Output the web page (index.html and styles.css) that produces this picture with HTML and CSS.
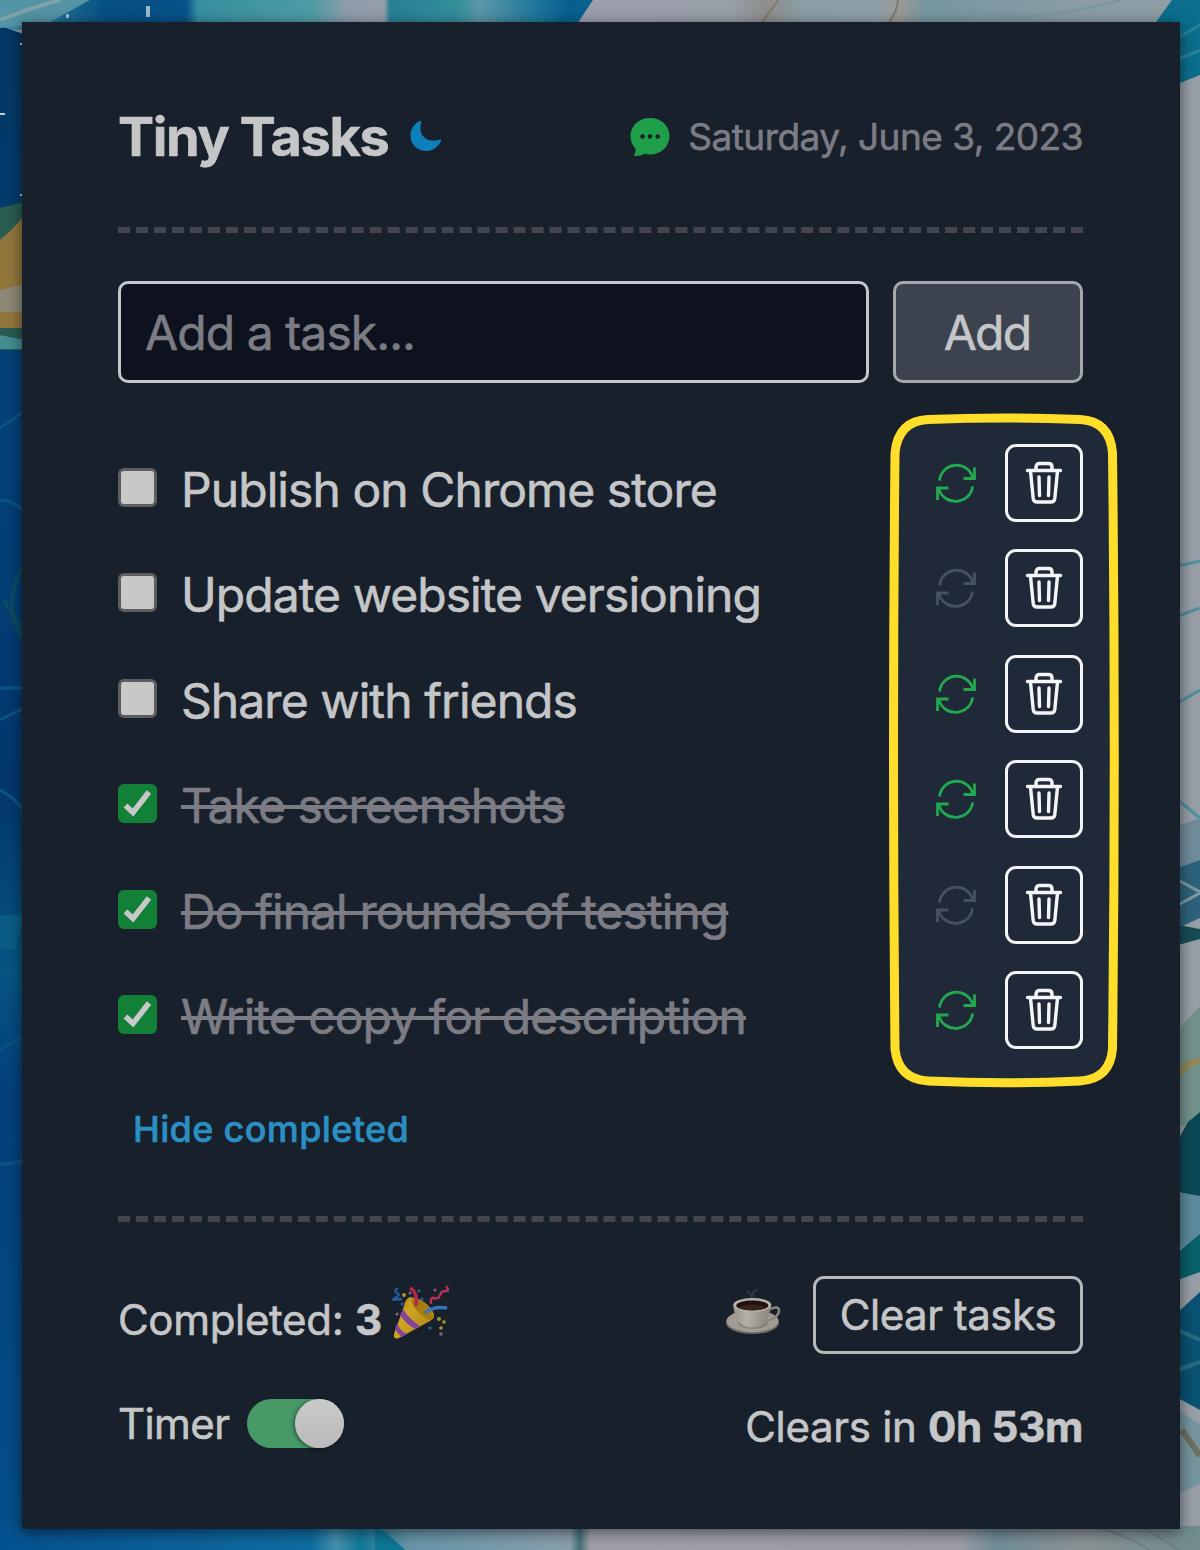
FILE: index.html
```html
<!DOCTYPE html>
<html lang="en">

<head>
    <meta charset="UTF-8">
    <meta name="viewport" content="width=device-width, initial-scale=1.0">
    <title>Tiny Tasks</title>
    <link rel="stylesheet" href="styles.css">
</head>

<body>
    <!-- Painted wallpaper behind the card -->
    <svg class="wallpaper" viewBox="0 0 1200 1550" preserveAspectRatio="none" aria-hidden="true">
        <defs>
            <linearGradient id="topPaint">
                <stop offset="0" stop-color="#4b8fa6" />
                <stop offset=".05" stop-color="#1c6f95" />
                <stop offset=".09" stop-color="#064f82" />
                <stop offset=".155" stop-color="#07538a" />
                <stop offset=".165" stop-color="#368fa0" />
                <stop offset=".26" stop-color="#4f9ca6" />
                <stop offset=".29" stop-color="#919dab" />
                <stop offset=".32" stop-color="#969dab" />
                <stop offset=".325" stop-color="#287f95" />
                <stop offset=".38" stop-color="#338e9b" />
                <stop offset=".4" stop-color="#5c97aa" />
                <stop offset=".45" stop-color="#1a759a" />
                <stop offset=".478" stop-color="#075b8d" />
                <stop offset=".484" stop-color="#9a9fac" />
                <stop offset=".61" stop-color="#989fa8" />
                <stop offset=".64" stop-color="#8e8e8c" />
                <stop offset=".67" stop-color="#8a9fa8" />
                <stop offset=".73" stop-color="#8fa0a8" />
                <stop offset=".75" stop-color="#9c9a95" />
                <stop offset=".77" stop-color="#76979f" />
                <stop offset=".9" stop-color="#8a9da6" />
                <stop offset="1" stop-color="#929fa6" />
            </linearGradient>
            <linearGradient id="leftPaint" x2="0" y2="1">
                <stop offset="0" stop-color="#043763" />
                <stop offset=".25" stop-color="#05427a" />
                <stop offset=".5" stop-color="#03376e" />
                <stop offset=".62" stop-color="#075583" />
                <stop offset=".7" stop-color="#04407c" />
                <stop offset="1" stop-color="#05508a" />
            </linearGradient>
            <linearGradient id="bottomPaint">
                <stop offset="0" stop-color="#055190" />
                <stop offset=".26" stop-color="#0f6da1" />
                <stop offset=".28" stop-color="#4690ae" />
                <stop offset=".3" stop-color="#12799a" />
                <stop offset=".34" stop-color="#6695a8" />
                <stop offset=".475" stop-color="#8aa0ad" />
                <stop offset=".483" stop-color="#486f78" />
                <stop offset=".492" stop-color="#a0a0aa" />
                <stop offset=".8" stop-color="#9c9da6" />
                <stop offset=".83" stop-color="#708e96" />
                <stop offset=".9" stop-color="#8b9397" />
                <stop offset="1" stop-color="#6f8c8e" />
            </linearGradient>
        </defs>
        <rect width="1200" height="1550" fill="#989fa8" />
        <rect width="1200" height="30" fill="url(#topPaint)" />
        <path d="M1172 0h28v75l-30 12-14-65z" fill="#0b6f8d" />
        <path d="M1165 45l35-20M1165 65l35-15" stroke="#2b8299" stroke-width="3" />
        <path d="M575 0h18l-16 24h-22z" fill="#08618f" />
        <path d="M760 24q12-14 18-24M888 24q10-14 10-24" stroke="#81796e" stroke-width="2" fill="none" />
        <path d="M960 8q60 20 160-8" stroke="#7c989f" stroke-width="3" fill="none" />
        <path d="M146 6h4v11h-4zM66 14h3v4h-3z" fill="#9dbccb" />

        <!-- left edge -->
        <path d="M0 26l24 8v1516H0z" fill="url(#leftPaint)" />
        <path d="M0 0h90L50 22 0 28z" fill="#5394a5" />
        <path d="M0 20Q30 8 60 0" stroke="#7fa2ab" stroke-width="4" fill="none" />
        <path d="M0 208l24-6v148H0z" fill="#285d51" />
        <path d="M0 240q14-12 24-24v112H0z" fill="#91763c" />
        <path d="M0 290l24-6v28H0z" fill="#8d8876" />
        <path d="M0 335l24 5v9H0z" fill="#448d91" />
        <path d="M0 428l24-17M0 500q14 0 24 12M0 688h24M0 720l24-12M0 790q16 8 24 22M0 1050l24-14M0 1165l24-4" stroke="#0a5581" stroke-width="3" fill="none" />
        <path d="M24 565q-24 40 0 75M4 600l20 34" stroke="#0c4a66" stroke-width="5" fill="none" />
        <path d="M0 915h24l-8 34H0z" fill="#0b5d86" />
        <path d="M0 114h5M20 44h4M20 195h4" stroke="#c4ccd0" stroke-width="2" />

        <!-- right edge -->
        <path d="M1178 566l22-5M1178 616l22-8M1178 703l22-13M1178 800l22 18" stroke="#4f919f" stroke-width="3" />
        <path d="M1178 826l22-8v50l-22 4z" fill="#708d9b" />
        <path d="M1178 868l22-8v58l-22 10z" fill="#2e637c" />
        <path d="M1178 880l22 12M1178 905l22-12" stroke="#8199a3" stroke-width="3" />
        <path d="M1178 925l22 4v10l-22 6z" fill="#174d56" />
        <path d="M1178 1030l22-24v120h-22z" fill="#74928c" />
        <path d="M1178 1075q10-14 22-14" stroke="#91875b" stroke-width="7" fill="none" />
        <path d="M1178 1140l10-18 12-10v85l-22-5z" fill="#0b4a55" />
        <path d="M1178 1192l22 4v46l-22 6z" fill="#5e8c9d" />
        <path d="M1178 1252l22-18v38l-22 8z" fill="#09606b" />
        <path d="M1178 1312l22-20v118l-22-12z" fill="#0a5272" />
        <path d="M1178 1330l22 10M1178 1370l22-8" stroke="#256f86" stroke-width="4" />
        <path d="M1178 1410l22 14v60l-22 10z" fill="#76959f" />
        <path d="M1182 1430l18 26" stroke="#6c7061" stroke-width="6" />

        <!-- bottom edge -->
        <rect y="1526" width="1200" height="24" fill="url(#bottomPaint)" />
        <path d="M375 1526q14 8 30 24h-30z" fill="#0e7796" />
        <path d="M1090 1526q30 6 60 24M1140 1526l40 24" stroke="#737f82" stroke-width="2" fill="none" />
    </svg>

    <!-- Reusable icons -->
    <svg class="sprite" aria-hidden="true">
        <symbol id="repeat" viewBox="0 0 42 40">
            <path d="M4.500 17.500A17 17 0 0 1 38 15.500M39.500 4.500V15.500H28.500M37.500 23.500A17 16 0 0 1 4 26M2.500 37V25H13.500" />
        </symbol>
        <symbol id="trash" viewBox="0 0 38 44">
            <path d="M2.500 10.500H35.500M11 10V7Q11 3.500 14.500 3.500H23.500Q27 3.500 27 7V10M5.500 11L8.200 38.500Q8.700 42 12 42H26Q29.300 42 29.800 38.500L32.500 11M14 17L14.500 35.500M24 17L23.500 35.500" />
        </symbol>
    </svg>

    <div class="card">
        <header class="header">
            <h1>Tiny Tasks</h1>
            <svg class="moon" viewBox="0 0 32 32">
                <path d="M11.500 1C7 17 18 23.500 30.500 19.500Q32 19 31 21C28 27 23 31 16.500 31C7 31 .5 24.500 .5 15.500C.5 9 4 3.500 10 1Q11.700 .3 11.500 1Z" />
            </svg>
            <svg class="chat" viewBox="0 0 40 40">
                <path d="M20 1C31 1 39.500 8.500 39.500 19S31 37.500 20 37.500Q17 37.500 14.500 36.800Q10 39.500 5 39Q3 38.500 4.500 37Q6 35 5.500 31.500Q.5 26.500 .5 19C.5 8.500 9 1 20 1Z" />
                <g fill="#18202b">
                    <circle cx="12.500" cy="19.500" r="2.300" />
                    <circle cx="20" cy="19.500" r="2.300" />
                    <circle cx="27.700" cy="19.500" r="2.300" />
                </g>
            </svg>
            <span class="date">Saturday, June 3, 2023</span>
        </header>

        <form class="add-form">
            <input class="task-input" type="text" placeholder="Add a task...">
            <button class="add-btn" type="button">Add</button>
        </form>

        <div class="tasks">
            <!-- Highlight around the task actions -->
            <svg class="highlight" viewBox="0 0 232 678">
                <path d="M40 8.500Q116 5.500 192 8.500Q222 10 224.500 42Q228 339 224.500 638Q222 668 192 670Q116 673.500 40 670Q10 668 7 638Q4 339 7 42Q10 10 40 8.500Z" />
            </svg>
            <ul class="task-list">
                <li class="task">
                    <span class="checkbox"></span>
                    <span class="task-name">Publish on Chrome store</span>
                    <svg class="repeat on"><use href="#repeat" /></svg>
                    <button class="delete-btn"><svg class="trash"><use href="#trash" /></svg></button>
                </li>
                <li class="task">
                    <span class="checkbox"></span>
                    <span class="task-name">Update website versioning</span>
                    <svg class="repeat"><use href="#repeat" /></svg>
                    <button class="delete-btn"><svg class="trash"><use href="#trash" /></svg></button>
                </li>
                <li class="task">
                    <span class="checkbox"></span>
                    <span class="task-name">Share with friends</span>
                    <svg class="repeat on"><use href="#repeat" /></svg>
                    <button class="delete-btn"><svg class="trash"><use href="#trash" /></svg></button>
                </li>
                <li class="task done">
                    <span class="checkbox"><svg viewBox="0 0 39 39"><path d="M7.500 21.500L15 28.500L31 8" /></svg></span>
                    <span class="task-name">Take screenshots</span>
                    <svg class="repeat on"><use href="#repeat" /></svg>
                    <button class="delete-btn"><svg class="trash"><use href="#trash" /></svg></button>
                </li>
                <li class="task done">
                    <span class="checkbox"><svg viewBox="0 0 39 39"><path d="M7.500 21.500L15 28.500L31 8" /></svg></span>
                    <span class="task-name">Do final rounds of testing</span>
                    <svg class="repeat"><use href="#repeat" /></svg>
                    <button class="delete-btn"><svg class="trash"><use href="#trash" /></svg></button>
                </li>
                <li class="task done">
                    <span class="checkbox"><svg viewBox="0 0 39 39"><path d="M7.500 21.500L15 28.500L31 8" /></svg></span>
                    <span class="task-name">Write copy for description</span>
                    <svg class="repeat on"><use href="#repeat" /></svg>
                    <button class="delete-btn"><svg class="trash"><use href="#trash" /></svg></button>
                </li>
            </ul>
        </div>

        <a class="hide-link">Hide completed</a>

        <footer class="footer">
            <div class="footer-row">
                <p class="completed">Completed: <b>3</b></p>
                <svg class="party" viewBox="0 0 60 60">
                    <defs>
                        <linearGradient id="cone" x1="0" y1="0" x2="1" y2=".6">
                            <stop offset="0" stop-color="#8d6a16" />
                            <stop offset=".4" stop-color="#d1a622" />
                            <stop offset="1" stop-color="#b48818" />
                        </linearGradient>
                    </defs>
                    <path d="M20 13Q15 15 14 22L4 50Q3 56 9 54L40 37Q47 34 42 26Q33 14 20 13Z" fill="url(#cone)" />
                    <path d="M13 25Q18 34 30 42L25 45Q15 39 10 31ZM7 39Q10 47 17 50L12 53Q7 49 5 45Z" fill="#83439c" />
                    <path d="M22 14Q32 14 40 25Q45 33 41 36Q34 34 27 27Q20 19 22 14Z" fill="#a67c13" />
                    <path d="M20 4Q28 8 26 22" fill="none" stroke="#b3284b" stroke-width="3.500" />
                    <path d="M35 29Q43 22 57 24" fill="none" stroke="#3476b8" stroke-width="3.500" />
                    <path d="M41 20Q40 13 44 14T49 13T51 9T56 7T56 2" fill="none" stroke="#b83053" stroke-width="2.500" />
                    <path d="M8 4Q3 7 7 9T5 14T12 15" fill="none" stroke="#24599e" stroke-width="2.500" />
                    <g fill="#a9962b">
                        <circle cx="14" cy="11" r="2" />
                        <circle cx="49" cy="35" r="2" />
                        <circle cx="54" cy="38" r="1.800" />
                        <circle cx="51" cy="44" r="1.800" />
                    </g>
                    <g fill="#9b547d">
                        <circle cx="20" cy="9" r="1.500" />
                        <circle cx="7" cy="30" r="1.500" />
                        <circle cx="51" cy="50" r="1.800" />
                        <circle cx="45" cy="6" r="1.500" />
                    </g>
                    <g fill="#2a6699">
                        <circle cx="29" cy="7" r="1.600" />
                        <circle cx="32" cy="15" r="1.600" />
                        <circle cx="40" cy="44" r="1.600" />
                        <circle cx="12" cy="20" r="1.500" />
                    </g>
                </svg>
                <svg class="coffee" viewBox="0 0 56 50">
                    <defs>
                        <linearGradient id="cup">
                            <stop offset="0" stop-color="#9a958c" />
                            <stop offset=".35" stop-color="#b5b0a6" />
                            <stop offset="1" stop-color="#87817a" />
                        </linearGradient>
                    </defs>
                    <path d="M21 3Q26 6 25 11M31 2Q24 5 28 9" fill="none" stroke="#343a43" stroke-width="2" />
                    <ellipse cx="26.500" cy="34.500" rx="26.500" ry="11.500" fill="#6f6c66" />
                    <ellipse cx="26.500" cy="33" rx="26" ry="11" fill="#a09c94" />
                    <ellipse cx="27" cy="35" rx="15" ry="6" fill="#87837b" />
                    <path d="M44 21Q53 17 53 23T41 33" fill="none" stroke="#8d8982" stroke-width="2.500" />
                    <path d="M7.500 17Q8 33 18 38Q26 41 34 38Q44 33 45 17Z" fill="url(#cup)" />
                    <ellipse cx="26.300" cy="17" rx="19" ry="7" fill="#b7b2a9" />
                    <ellipse cx="26.300" cy="17.500" rx="16" ry="5" fill="#1f130f" />
                    <ellipse cx="26.300" cy="19.500" rx="12.500" ry="2.800" fill="#3b2119" />
                </svg>
                <button class="clear-btn">Clear tasks</button>
            </div>
            <div class="footer-row timer-row">
                <span class="timer-label">Timer</span>
                <span class="toggle"><span class="knob"></span></span>
                <p class="clears">Clears in <b>0h 53m</b></p>
            </div>
        </footer>
    </div>
</body>

</html>
```

FILE: styles.css
```css
/* Basic Reset */
* {
    margin: 0;
    padding: 0;
    box-sizing: border-box;
}

body {
    font-family: Inter, sans-serif;
    background-color: #04467a;
    color: #c5c6c8;
    width: 1200px;
    height: 1550px;
    padding: 22px 20px 21px 22px;
    overflow: hidden;
}

.wallpaper {
    position: absolute;
    top: 0;
    left: 0;
    width: 1200px;
    height: 1550px;
    z-index: -1;
}

.sprite {
    display: none;
}

button,
input {
    font-family: inherit;
    color: inherit;
}

/* Card */
.card {
    width: 1158px;
    height: 1507px;
    padding: 0 97px 0 96px;
    background-color: #18202b;
    box-shadow: 0 3px 14px rgba(0, 0, 0, 0.55);
    -webkit-text-stroke-width: 0.6px;
}

/* Header */
.header {
    display: flex;
    align-items: center;
    height: 211px;
    padding-top: 24px;
    border-bottom: 6px dashed #45454d;
}

.header h1 {
    font-size: 54px;
    font-weight: 700;
    letter-spacing: -1.36px;
    line-height: 66px;
}

.moon {
    width: 32px;
    height: 32px;
    margin-left: 22px;
    margin-bottom: 2px;
    fill: #0d7fbb;
}

.chat {
    width: 40px;
    height: 40px;
    margin-left: auto;
    fill: #1f9f49;
}

.date {
    margin-left: 18px;
    font-size: 37px;
    letter-spacing: -0.52px;
    color: #7c7c85;
}

/* Add form */
.add-form {
    display: flex;
    gap: 24px;
    margin-top: 48px;
}

.task-input {
    width: 751px;
    height: 102px;
    padding: 0 24px;
    border: 3px solid #c3c6ca;
    border-radius: 10px;
    background-color: #0d121e;
    font-size: 48px;
    letter-spacing: -0.92px;
    -webkit-text-stroke-width: 0.6px;
}

.task-input::placeholder {
    color: #7c7c85;
}

.add-btn {
    flex: 1;
    padding-right: 2px;
    border: 3px solid #a5a8ad;
    border-radius: 10px;
    background-color: #3c434f;
    font-size: 48px;
    letter-spacing: -1.75px;
}

/* Task list */
.tasks {
    position: relative;
    margin-top: 60.5px;
}

.highlight {
    position: absolute;
    top: -33px;
    left: 770px;
    width: 232px;
    height: 678px;
    fill: #202938;
    stroke: #ffde2b;
    stroke-width: 9px;
}

.task-list {
    position: relative;
    display: flex;
    flex-direction: column;
    gap: 27.5px;
    list-style: none;
}

.task {
    display: flex;
    align-items: center;
    height: 78px;
}

.checkbox {
    width: 39px;
    height: 39px;
    margin-top: 9px;
    border: 3px solid #5d5d5f;
    border-radius: 6px;
    background-color: #c8c8c8;
}

.task-name {
    margin-top: 13px;
    margin-left: 24px;
    font-size: 48px;
    letter-spacing: -0.93px;
    white-space: nowrap;
}

.done .checkbox {
    border: none;
    background-color: #138038;
}

.done .checkbox svg {
    display: block;
    fill: none;
    stroke: #c8c8c8;
    stroke-width: 5.5px;
}

.done .task-name {
    color: #7c7c85;
    text-decoration: line-through;
    text-decoration-thickness: 4px;
}

.repeat {
    width: 42px;
    height: 40px;
    margin-left: auto;
    fill: none;
    stroke: #465162;
    stroke-width: 2.8px;
}

.repeat.on {
    stroke: #22a950;
}

.delete-btn {
    display: flex;
    justify-content: center;
    width: 78px;
    height: 78px;
    margin-left: 28px;
    padding-top: 13px;
    border: 3px solid #f4f5f7;
    border-radius: 11px;
    background: none;
}

.trash {
    width: 38px;
    height: 44px;
    fill: none;
    stroke: #f4f5f7;
    stroke-width: 3.4px;
    stroke-linecap: round;
}

/* Hide completed */
.hide-link {
    display: block;
    margin-top: 57.5px;
    margin-left: 15px;
    font-size: 36px;
    font-weight: 500;
    line-height: 44px;
    letter-spacing: 0.35px;
    color: #2b8fc4;
}

/* Footer */
.footer {
    margin-top: 65px;
    border-top: 6px dashed #45454d;
    padding-top: 54px;
    font-size: 42px;
}

.footer-row {
    display: flex;
    align-items: center;
    height: 78px;
}

.completed {
    margin-top: 10px;
    letter-spacing: -0.32px;
}

.party {
    width: 60px;
    height: 60px;
    margin-left: 8px;
    margin-bottom: 2px;
}

.coffee {
    width: 56px;
    height: 50px;
    margin-left: auto;
    margin-bottom: 3px;
}

.clear-btn {
    width: 270px;
    height: 78px;
    margin-left: 31px;
    border: 3px solid #b5b8bd;
    border-radius: 11px;
    background: none;
    font-size: 42px;
    letter-spacing: -0.5px;
}

.timer-row {
    height: 49px;
    margin-top: 45px;
}

.timer-label {
    letter-spacing: -0.6px;
}

.toggle {
    display: flex;
    justify-content: flex-end;
    width: 97px;
    height: 49px;
    margin-left: 18px;
    border-radius: 25px;
    background-color: #479966;
}

.knob {
    width: 49px;
    height: 49px;
    border-radius: 50%;
    background: linear-gradient(#cacaca, #bababa);
    box-shadow: -1px 1px 4px rgba(0, 0, 0, 0.5);
}

.clears {
    margin-left: auto;
    margin-top: 6px;
    letter-spacing: -0.3px;
}
```
